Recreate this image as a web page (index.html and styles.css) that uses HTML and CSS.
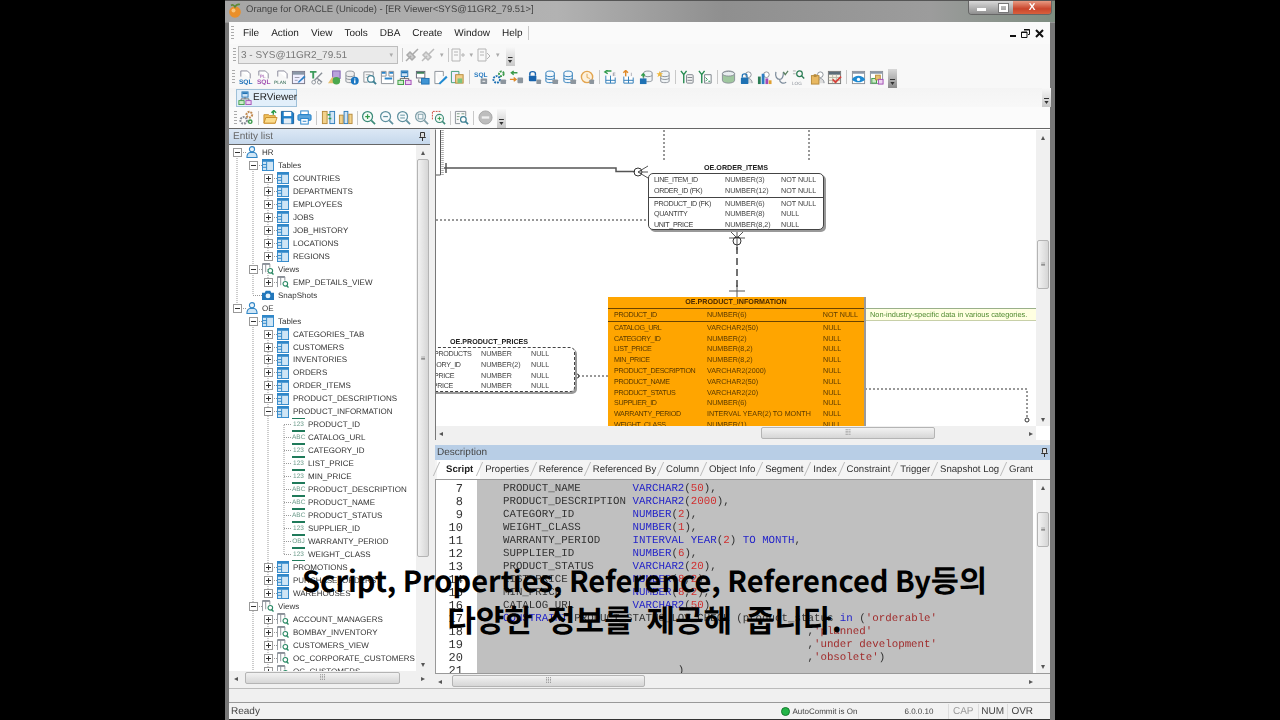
FILE: index.html
```html
<!DOCTYPE html>
<html lang="en">

<head>
    <meta charset="UTF-8">
    <title>Orange for ORACLE</title>
    <link rel="stylesheet" href="styles.css">
</head>

<body>

    <!-- icon set -->
    <svg class="defs" width="0" height="0">
        <symbol id="doc-sql" viewBox="0 0 16 16"><path d="M3 1h7l3 3v5M3 1v6" fill="#fff" stroke="#889"/><text x="1" y="15" class="t7" fill="#1b6fb8">SQL</text></symbol>
        <symbol id="doc-pl" viewBox="0 0 16 16"><path d="M3 1h7l3 3v5M3 1v5" fill="#fff" stroke="#889"/><text x="4" y="8" class="t5" fill="#a050b0">PL</text><text x="1" y="15" class="t7" fill="#a050b0">SQL</text></symbol>
        <symbol id="doc-plan" viewBox="0 0 16 16"><path d="M4 1h7l3 3v5M4 1v6" fill="#fff" stroke="#889"/><text x="0" y="15" class="t5" fill="#27624a">PLAN</text></symbol>
        <symbol id="edit" viewBox="0 0 16 16"><rect x="1.500" y="1.500" width="13" height="13" fill="#eef" stroke="#778"/><path d="M2 2h12v3H2z" fill="#8a97a8"/><path d="M4 8h5M4 11h3" stroke="#99a"/><path d="M7 13l7-7 1.500 1.500-7 6z" fill="#2a7fc4"/></symbol>
        <symbol id="scissor" viewBox="0 0 16 16"><path d="M1 2h7M4.500 2v7" stroke="#3c9a5a" stroke-width="2"/><path d="M14 3L6 11M9 9l5 4" stroke="#8a9098" stroke-width="1.500"/><circle cx="5" cy="13" r="2" fill="none" stroke="#8a9098"/><circle cx="11" cy="13" r="2" fill="none" stroke="#8a9098"/></symbol>
        <symbol id="obj" viewBox="0 0 16 16"><rect x="6" y="1" width="8" height="8" fill="#b9a2dc" stroke="#7d5db0"/><path d="M1 14l5-7 3 7z" fill="#e6c070"/><circle cx="10" cy="11.500" r="4" fill="#4ba84e"/></symbol>
        <symbol id="db-info" viewBox="0 0 16 16"><path d="M2 3c0-2.500 9-2.500 9 0v9c0 2-9 2-9 0z" fill="#eee" stroke="#8a9098"/><path d="M2 6c2 1.500 7 1.500 9 0M2 9c2 1.500 7 1.500 9 0" fill="none" stroke="#8a9098"/><circle cx="11.500" cy="11.500" r="4.200" fill="#1976c2"/><path d="M11.500 9v1M11.500 11v3" stroke="#fff" stroke-width="1.500"/></symbol>
        <symbol id="doc-find" viewBox="0 0 16 16"><path d="M2 2h10v4M2 2v11h4" fill="none" stroke="#8a9098"/><path d="M4 5h5M4 8h2" stroke="#aaa"/><circle cx="9.500" cy="9.500" r="3.500" fill="#fff" stroke="#3d7f92" stroke-width="1.300"/><path d="M12 12l3 3" stroke="#3d7f92" stroke-width="2"/></symbol>
        <symbol id="panes" viewBox="0 0 16 16"><path d="M1.500 1.500h5v5h-5zM9.500 1.500h5v5h-5zM1.500 6.500v8h13v-8" fill="#fff" stroke="#8a9098"/><path d="M2 2h4v2H2zM10 2h4v2h-4zM5 8h8v2H5z" fill="#2a85cb"/></symbol>
        <symbol id="er" viewBox="0 0 16 16"><rect x="4.500" y="1" width="7" height="6" fill="#cfe4f6" stroke="#1f72b4"/><path d="M5 1.500h6v2H5z" fill="#1f72b4"/><path d="M8 7v2M3.500 11V9h9v2" fill="none" stroke="#666"/><rect x="1" y="11" width="6" height="4.500" fill="#cdeccb" stroke="#3b9a41"/><rect x="9" y="11" width="6" height="4.500" fill="#ecd4f0" stroke="#a14cb5"/></symbol>
        <symbol id="grid" viewBox="0 0 16 16"><rect x="1.500" y="1.500" width="9" height="7" fill="#fff" stroke="#667"/><path d="M2 2h8v2H2z" fill="#3d7f58"/><path d="M4 10v3h3" fill="none" stroke="#666"/><rect x="7" y="9" width="8" height="6" fill="#3f94d4" stroke="#1f72b4"/></symbol>
        <symbol id="page-pen" viewBox="0 0 16 16"><path d="M2 1.500h9v5M2 1.500v13h5" fill="#fff" stroke="#8a9098"/><path d="M6 14l8-8 1.500 2-8 7.500z" fill="#1f8ad2"/></symbol>
        <symbol id="doc-color" viewBox="0 0 16 16"><path d="M1.500 1.500h8v12h-8z" fill="#eef" stroke="#3f9c73"/><rect x="6" y="5" width="8" height="9" fill="#f2ce8a" stroke="#b78a3a"/><rect x="8" y="9" width="5" height="5" fill="#7dc47f"/></symbol>
        <symbol id="sql-box" viewBox="0 0 16 16"><text x="0" y="7" class="t7" fill="#2b7cc0">SQL</text><rect x="7" y="9" width="7" height="6" rx="1" fill="#8d969e"/><path d="M9 12h3" stroke="#fff"/></symbol>
        <symbol id="gear-box" viewBox="0 0 16 16"><circle cx="5" cy="10" r="3.500" fill="none" stroke="#1f72b4" stroke-width="2" stroke-dasharray="2 1"/><circle cx="10" cy="4" r="2.500" fill="none" stroke="#3a9a4a" stroke-width="2" stroke-dasharray="2 1"/><rect x="9" y="10" width="6" height="5" rx="1" fill="#8d969e"/></symbol>
        <symbol id="arrows-box" viewBox="0 0 16 16"><path d="M9 3H3M5 1L2.500 3 5 5" fill="none" stroke="#3a9a4a" stroke-width="1.500"/><path d="M1 10h6M5 8l2.500 2L5 12" fill="none" stroke="#e08a28" stroke-width="1.500"/><rect x="9" y="8" width="6" height="6" rx="1" fill="#8d969e"/></symbol>
        <symbol id="lock-box" viewBox="0 0 16 16"><path d="M3 6V4c0-3 6-3 6 0v2" fill="none" stroke="#1763ad" stroke-width="1.500"/><rect x="2" y="6" width="8" height="6" rx="1" fill="#1763ad"/><rect x="10" y="10" width="5" height="5" rx="1" fill="#8d969e"/></symbol>
        <symbol id="db-box" viewBox="0 0 16 16"><path d="M2 3c0-2.500 9-2.500 9 0v9c0 2-9 2-9 0z" fill="#f3f8fc" stroke="#2c7bb8"/><path d="M2 6c2 1.500 7 1.500 9 0M2 9c2 1.500 7 1.500 9 0" fill="none" stroke="#2c7bb8"/><rect x="9" y="10" width="6" height="5" rx="1" fill="#8d969e"/></symbol>
        <symbol id="clock-box" viewBox="0 0 16 16"><circle cx="7.500" cy="7.500" r="6" fill="#fdf1dc" stroke="#e3a550" stroke-width="1.500"/><path d="M7.500 4v4l3 1" fill="none" stroke="#e3a550"/><rect x="10" y="10" width="5" height="5" rx="1" fill="#8d969e"/></symbol>
        <symbol id="t-in" viewBox="0 0 16 16"><path d="M9 1H3M5 0L2 2l3 2" fill="none" stroke="#2f9b4a" stroke-width="1.500"/><text x="10" y="6" class="t5" fill="#667">E</text><path d="M3 6v8h10V8" fill="#fff" stroke="#2c7bb8"/><path d="M3 11h10M8 6v8" stroke="#2c7bb8"/></symbol>
        <symbol id="t-up" viewBox="0 0 16 16"><path d="M5 7V1M2.500 3L5 .5 7.500 3" fill="none" stroke="#e08a28" stroke-width="1.500"/><text x="10" y="6" class="t5" fill="#667">I</text><path d="M3 7v7h10V8" fill="#fff" stroke="#2c7bb8"/><path d="M3 11h10M8 7v7" stroke="#2c7bb8"/></symbol>
        <symbol id="db-in" viewBox="0 0 16 16"><path d="M5 3c0-2.500 9-2.500 9 0v8c0 2-9 2-9 0z" fill="#f0f4f6" stroke="#8a9098"/><path d="M5 6c2 1.500 7 1.500 9 0" fill="none" stroke="#8a9098"/><rect x="1" y="9" width="7" height="6" fill="#1f72b4"/><path d="M4.500 8V4M2.500 6l2-2 2 2" fill="none" stroke="#2f9b4a" stroke-width="1.500"/></symbol>
        <symbol id="db-star" viewBox="0 0 16 16"><path d="M5 3c0-2.500 9-2.500 9 0v9c0 2-9 2-9 0z" fill="#f0f4f6" stroke="#8a9098"/><path d="M5 6c2 1.500 7 1.500 9 0M5 9c2 1.500 7 1.500 9 0" fill="none" stroke="#8a9098"/><path d="M4 1l1 2.500h2.500L5.500 5l1 2.500L4 6 1.500 7.500l1-2.500L.5 3.500H3z" fill="#f0b73a"/></symbol>
        <symbol id="y-db" viewBox="0 0 16 16"><path d="M1 1l3 4 3-4M4 5v9" fill="none" stroke="#278c52" stroke-width="1.500"/><rect x="7" y="5" width="7" height="9" rx="1" fill="#f2f2f2" stroke="#7a8088"/><path d="M8 8h5M8 11h5" stroke="#7a8088"/></symbol>
        <symbol id="y-doc" viewBox="0 0 16 16"><path d="M1 1l3 4 3-4M4 5v9" fill="none" stroke="#278c52" stroke-width="1.500"/><path d="M7 5h7v9H7z" fill="#fff" stroke="#7a8088"/><path d="M8 8l2 2-2 2M11 12h2" fill="none" stroke="#278c52"/></symbol>
        <symbol id="db-green" viewBox="0 0 16 16"><ellipse cx="8" cy="4" rx="6.500" ry="3" fill="#e9eef0" stroke="#8a9098"/><path d="M1.500 4v7c0 4 13 4 13 0V4" fill="#9fc79f" stroke="#8a9098"/><ellipse cx="8" cy="4" rx="6.500" ry="2.500" fill="#e9eef0" stroke="#8a9098"/></symbol>
        <symbol id="u-lock" viewBox="0 0 16 16"><circle cx="10" cy="5" r="3" fill="#fff" stroke="#8a9098"/><path d="M8 14c0-4 1-5 2-5s4 1 4 5" fill="#ddd" stroke="#8a9098"/><path d="M3.500 8V6c0-2.500 5-2.500 5 0v2" fill="none" stroke="#1f72b4" stroke-width="1.300"/><rect x="2" y="8" width="8" height="7" rx="1" fill="#1f72b4"/></symbol>
        <symbol id="u-bars" viewBox="0 0 16 16"><circle cx="10" cy="5" r="3" fill="#fff" stroke="#8a9098"/><rect x="1" y="7" width="3" height="8" fill="#2a7c54"/><rect x="5" y="4" width="3" height="11" fill="#2a7cc4"/><rect x="9" y="9" width="3" height="6" fill="#a04ab5"/><rect x="12.500" y="11" width="3" height="4" fill="#e0a030"/></symbol>
        <symbol id="scope" viewBox="0 0 16 16"><path d="M2 2c-1 5 1 8 4 8s4-3 4-8M6 10c0 4 4 5 7 3" fill="none" stroke="#7a8a9a" stroke-width="1.300"/><path d="M10 2l2 3 3-4" fill="none" stroke="#5a8060" stroke-width="1.300"/></symbol>
        <symbol id="log" viewBox="0 0 16 16"><circle cx="8" cy="4" r="3" fill="none" stroke="#2a7c54" stroke-width="1.300"/><path d="M10 6l3 3" stroke="#2a7c54" stroke-width="1.500"/><path d="M1 1h3M1 4h3" stroke="#aaa"/><text x="0" y="15.500" class="t5" fill="#8a9098">LOG</text></symbol>
        <symbol id="u-clip" viewBox="0 0 16 16"><circle cx="11" cy="5" r="3" fill="#fff" stroke="#8a9098"/><path d="M9 14c0-4 1-5 2-5s4 1 4 5" fill="#ddd" stroke="#8a9098"/><rect x="1.500" y="6" width="8" height="9" fill="#e8b860" stroke="#b78a3a"/><rect x="4" y="4.500" width="3" height="3" fill="#b78a3a"/></symbol>
        <symbol id="sheet-check" viewBox="0 0 16 16"><rect x="1.500" y="1.500" width="13" height="13" fill="#f7f2e8" stroke="#777"/><path d="M2 2h12v3H2z" fill="#5c6c78"/><path d="M2 8h12M2 11h12M6 5v9M10 5v9" stroke="#bba"/><path d="M6 10l3 3 6-6" fill="none" stroke="#d8403a" stroke-width="1.800"/></symbol>
        <symbol id="win-eye" viewBox="0 0 16 16"><rect x="1.500" y="1.500" width="13" height="13" fill="#fff" stroke="#8a9098"/><path d="M2 2h12v2H2z" fill="#8a97a8"/><path d="M1 10c3-5 11-5 14 0-3 4-11 4-14 0z" fill="#1f8ad2"/><circle cx="8" cy="10" r="1.800" fill="#fff"/></symbol>
        <symbol id="win-sq" viewBox="0 0 16 16"><rect x="1.500" y="1.500" width="13" height="13" fill="#fff" stroke="#8a9098"/><path d="M2 2h12v2H2z" fill="#8a97a8"/><rect x="3" y="9" width="5" height="5" fill="#cdeccb" stroke="#3b9a41"/><rect x="7" y="5.500" width="5" height="5" fill="#e8c070" stroke="#b78a3a"/><rect x="10" y="10" width="5" height="5" fill="#ecd4f0" stroke="#a14cb5"/></symbol>
        <symbol id="gears" viewBox="0 0 16 16"><circle cx="5" cy="11" r="3.500" fill="none" stroke="#8a9098" stroke-width="2.200" stroke-dasharray="2 1"/><circle cx="11" cy="5" r="3" fill="none" stroke="#c08a50" stroke-width="2.200" stroke-dasharray="2 1"/><circle cx="12" cy="12.500" r="1.800" fill="none" stroke="#3a9a4a" stroke-width="1.500"/></symbol>
        <symbol id="open" viewBox="0 0 16 16"><path d="M1 5h5l1 1h6v8H1z" fill="#f2c25c" stroke="#c98e2c"/><path d="M1 14l2-6h12l-2 6z" fill="#fbdc8c" stroke="#c98e2c"/><path d="M8 5V1M6 3l2.500-2.500L11 3" transform="translate(3 0)" fill="none" stroke="#2f9b4a" stroke-width="1.500"/></symbol>
        <symbol id="save" viewBox="0 0 16 16"><path d="M1.500 1.500h11l2 2v11h-13z" fill="#1f7fc9" stroke="#17609c"/><rect x="4" y="2" width="8" height="4.500" fill="#fff"/><rect x="4" y="9" width="8" height="5.500" fill="#e4eef6"/></symbol>
        <symbol id="print" viewBox="0 0 16 16"><rect x="4" y="1" width="8" height="4" fill="#fff" stroke="#1f7fc9"/><rect x="1" y="5" width="14" height="6" rx="1" fill="#5aa5dc" stroke="#1f7fc9"/><rect x="4" y="9" width="8" height="6" fill="#fff" stroke="#1f7fc9"/><path d="M6 12h4" stroke="#1f7fc9"/></symbol>
        <symbol id="sw-a" viewBox="0 0 16 16"><rect x="1.500" y="1.500" width="5" height="13" fill="#f2d28c" stroke="#b78a3a"/><rect x="9.500" y="1.500" width="5" height="13" fill="#d0e4f4" stroke="#2c7bb8"/><path d="M7 5h3M8 9h3" stroke="#2f9b4a" stroke-width="1.500"/></symbol>
        <symbol id="sw-b" viewBox="0 0 16 16"><rect x="1.500" y="5.500" width="4" height="9" fill="#f2d28c" stroke="#b78a3a"/><rect x="6.500" y="1.500" width="4" height="13" fill="#d0e4f4" stroke="#2c7bb8"/><rect x="11.500" y="4.500" width="3.500" height="10" fill="#f2d28c" stroke="#b78a3a"/></symbol>
        <symbol id="z-in" viewBox="0 0 16 16"><circle cx="7" cy="7" r="5.300" fill="#f4faf6" stroke="#3a8a78" stroke-width="1.300"/><path d="M11 11l4 4" stroke="#3a8a78" stroke-width="1.800"/><path d="M4.500 7h5M7 4.500v5" stroke="#2f9b4a" stroke-width="1.300"/></symbol>
        <symbol id="z-out" viewBox="0 0 16 16"><circle cx="7" cy="7" r="5.300" fill="#f6fafc" stroke="#5d8f9e" stroke-width="1.300"/><path d="M11 11l4 4" stroke="#5d8f9e" stroke-width="1.800"/><path d="M4.500 7h5" stroke="#5d8f9e" stroke-width="1.300"/></symbol>
        <symbol id="z-eq" viewBox="0 0 16 16"><circle cx="7" cy="7" r="5.300" fill="#f6fafc" stroke="#5d8f9e" stroke-width="1.300"/><path d="M11 11l4 4" stroke="#5d8f9e" stroke-width="1.800"/><path d="M4.500 5.500h5M4.500 8.500h5" stroke="#5d8f9e"/></symbol>
        <symbol id="z-fit" viewBox="0 0 16 16"><circle cx="7" cy="7" r="5.300" fill="#f6fafc" stroke="#7d9da6" stroke-width="1.300"/><path d="M11 11l4 4" stroke="#7d9da6" stroke-width="1.800"/><rect x="4.500" y="4.500" width="5" height="5" fill="none" stroke="#7d9da6"/></symbol>
        <symbol id="z-area" viewBox="0 0 16 16"><path d="M1.500 10V1.500H10" fill="none" stroke="#c9483c" stroke-dasharray="2 1"/><circle cx="9" cy="9" r="4.300" fill="#f4faf6" stroke="#3a8a78" stroke-width="1.200"/><path d="M12 12l3 3" stroke="#3a8a78" stroke-width="1.800"/><path d="M7 9h4M9 7v4" stroke="#2f9b4a"/></symbol>
        <symbol id="find-sheet" viewBox="0 0 16 16"><path d="M1.500 1.500h11v5M1.500 1.500v13h5" fill="#f7f7f7" stroke="#8a9098"/><path d="M3 4h3M8 4h3M3 7h3M3 10h2" stroke="#7a9a80"/><circle cx="10" cy="10" r="3" fill="#fff" stroke="#3d7f92" stroke-width="1.300"/><path d="M12 12l3 3" stroke="#3d7f92" stroke-width="1.800"/></symbol>
        <symbol id="no" viewBox="0 0 16 16"><circle cx="8" cy="8" r="7" fill="#bdbdbd" stroke="#a8a8a8"/><path d="M4 8h8" stroke="#efefef" stroke-width="2.500"/></symbol>
        <symbol id="pin" viewBox="0 0 7 9"><path d="M1.500 .5h4v4l1 1h-6l1-1z" fill="#ddd" stroke="#333"/><path d="M3.500 5.500V9" stroke="#333"/></symbol>

        <!-- tree -->
        <symbol id="user" viewBox="0 0 13 13"><circle cx="6.500" cy="3.500" r="2.800" fill="#eaf4fb" stroke="#3186c6" stroke-width="1.200"/><path d="M1 12.500c0-3 1-5 3-5.500h5c2 .5 3 2.500 3 5.500z" fill="#cfe6f6" stroke="#3186c6" stroke-width="1.200"/></symbol>
        <symbol id="table" viewBox="0 0 13 13"><rect width="13" height="13" fill="#2f87c9"/><rect x="1" y="3" width="11" height="9" fill="#cfe5f5"/><path d="M5 3v9M1 6h4M1 9h4" stroke="#2f87c9"/></symbol>
        <symbol id="view" viewBox="0 0 13 13"><path d="M.5 12V1h8v4M4 1v9" fill="none" stroke="#8a9098"/><path d="M.5 1h8" stroke="#8a9098" stroke-width="2"/><circle cx="9" cy="8.500" r="2.500" fill="#fff" stroke="#2c8a66" stroke-width="1.200"/><path d="M10.500 10.500l2 2" stroke="#2c8a66" stroke-width="1.500"/></symbol>
        <symbol id="camera" viewBox="0 0 13 13"><path d="M0 4h3l1-2h5l1 2h3v8H0z" fill="#2277bb"/><circle cx="6.500" cy="7.500" r="2.600" fill="#e6f3fb"/></symbol>
    </svg>

    <div class="window">

        <header class="title">
            <svg class="orange" viewBox="0 0 14 15"><circle cx="7" cy="9" r="5.800" fill="#e98f2a"/><circle cx="5.500" cy="7.500" r="2" fill="#f8c47a"/><path d="M3 2.500c2-1.500 3 0 4 1.500 1-2 3-3 5-2.500" fill="none" stroke="#5d8a35" stroke-width="1.600"/></svg>
            <span class="title-text">Orange for ORACLE (Unicode) - [ER Viewer&lt;SYS@11GR2_79.51&gt;]</span>
            <div class="controls">
                <span class="ctl ctl-min"><i></i></span>
                <span class="ctl ctl-max"><i></i></span>
                <span class="ctl ctl-close">X</span>
            </div>
        </header>

        <nav class="menubar">
            <span class="grip"></span>
            <span class="menu-item">File</span>
            <span class="menu-item">Action</span>
            <span class="menu-item">View</span>
            <span class="menu-item">Tools</span>
            <span class="menu-item">DBA</span>
            <span class="menu-item">Create</span>
            <span class="menu-item">Window</span>
            <span class="menu-item">Help</span>
            <span class="sep menu-sep"></span>
            <div class="mdi">
                <span class="mdi-min"></span>
                <svg viewBox="0 0 9 9" width="9" height="9"><path d="M3 .500h5.500v5H7M.500 3h5.500v5.500H.500z" fill="none" stroke="#111"/><path d="M3 1h5.500M.500 3.500h5.500" stroke="#111"/></svg>
                <svg viewBox="0 0 9 9" width="9" height="9"><path d="M1 1l7 7M8 1L1 8" stroke="#111" stroke-width="2"/></svg>
            </div>
        </nav>

        <div class="toolbar conn-bar">
            <span class="grip"></span>
            <div class="combo"><span>3 - SYS@11GR2_79.51</span><b>▾</b></div>
            <span class="sep"></span>
            <svg class="dim" viewBox="0 0 16 16" width="16" height="16"><path d="M2 14l5-5M6 5l5 5-3 3-5-5zM9 7l5-5" fill="#ccc" stroke="#aaa" stroke-width="1.500"/></svg>
            <svg class="dim" viewBox="0 0 16 16" width="16" height="16"><path d="M2 14l5-5M6 5l5 5-3 3-5-5zM9 7l5-5" fill="#ddd" stroke="#bbb" stroke-width="1.500"/></svg>
            <b class="drop">▾</b>
            <span class="sep"></span>
            <svg class="dim" viewBox="0 0 16 16" width="16" height="16"><path d="M2 2h8v12H2zM4 5h4M4 8h4M11 8h4M13 6v4" fill="none" stroke="#b4b4b4"/></svg>
            <b class="drop">▾</b>
            <svg class="dim" viewBox="0 0 16 16" width="16" height="16"><path d="M2 2h8v12H2zM4 5h4M4 8h4M11 6l3 3-3 3" fill="none" stroke="#b4b4b4"/></svg>
            <b class="drop">▾</b>
            <span class="more"></span>
        </div>

        <div class="toolbar icons-bar">
            <span class="grip"></span>
            <svg class="btn"><use href="#doc-sql"/></svg>
            <svg class="btn"><use href="#doc-pl"/></svg>
            <svg class="btn"><use href="#doc-plan"/></svg>
            <svg class="btn"><use href="#edit"/></svg>
            <svg class="btn"><use href="#scissor"/></svg>
            <svg class="btn"><use href="#obj"/></svg>
            <svg class="btn"><use href="#db-info"/></svg>
            <svg class="btn"><use href="#doc-find"/></svg>
            <svg class="btn"><use href="#panes"/></svg>
            <svg class="btn"><use href="#er"/></svg>
            <svg class="btn"><use href="#grid"/></svg>
            <svg class="btn"><use href="#page-pen"/></svg>
            <svg class="btn"><use href="#doc-color"/></svg>
            <span class="sep"></span>
            <svg class="btn"><use href="#sql-box"/></svg>
            <svg class="btn"><use href="#gear-box"/></svg>
            <svg class="btn"><use href="#arrows-box"/></svg>
            <svg class="btn"><use href="#lock-box"/></svg>
            <svg class="btn"><use href="#db-box"/></svg>
            <svg class="btn"><use href="#db-box"/></svg>
            <svg class="btn"><use href="#clock-box"/></svg>
            <span class="sep"></span>
            <svg class="btn"><use href="#t-in"/></svg>
            <svg class="btn"><use href="#t-up"/></svg>
            <svg class="btn"><use href="#db-in"/></svg>
            <svg class="btn"><use href="#db-star"/></svg>
            <span class="sep"></span>
            <svg class="btn"><use href="#y-db"/></svg>
            <svg class="btn"><use href="#y-doc"/></svg>
            <span class="sep"></span>
            <svg class="btn"><use href="#db-green"/></svg>
            <svg class="btn"><use href="#u-lock"/></svg>
            <svg class="btn"><use href="#u-bars"/></svg>
            <svg class="btn"><use href="#scope"/></svg>
            <svg class="btn"><use href="#log"/></svg>
            <svg class="btn"><use href="#u-clip"/></svg>
            <svg class="btn"><use href="#sheet-check"/></svg>
            <span class="sep"></span>
            <svg class="btn"><use href="#win-eye"/></svg>
            <svg class="btn"><use href="#win-sq"/></svg>
            <span class="more more-dark"></span>
        </div>

        <div class="toolbar doc-tabs">
            <div class="doc-tab"><svg class="btn"><use href="#er"/></svg>ERViewer</div>
            <span class="more more-end"></span>
        </div>

        <div class="toolbar er-bar">
            <span class="grip"></span>
            <svg class="btn"><use href="#gears"/></svg>
            <span class="sep"></span>
            <svg class="btn"><use href="#open"/></svg>
            <svg class="btn"><use href="#save"/></svg>
            <svg class="btn"><use href="#print"/></svg>
            <span class="sep"></span>
            <svg class="btn"><use href="#sw-a"/></svg>
            <svg class="btn"><use href="#sw-b"/></svg>
            <span class="sep"></span>
            <svg class="btn"><use href="#z-in"/></svg>
            <svg class="btn"><use href="#z-out"/></svg>
            <svg class="btn"><use href="#z-eq"/></svg>
            <svg class="btn"><use href="#z-fit"/></svg>
            <svg class="btn"><use href="#z-area"/></svg>
            <span class="sep"></span>
            <svg class="btn"><use href="#find-sheet"/></svg>
            <span class="sep"></span>
            <svg class="btn"><use href="#no"/></svg>
            <span class="more"></span>
        </div>

        <div class="main">

            <!-- 왼쪽 엔티티 목록 -->
            <section class="entity">
                <div class="dock-title">Entity list<svg class="pin"><use href="#pin"/></svg></div>
                <div class="entity-body">
                    <div class="tree">
                        <svg class="guides" width="70" height="526"><path d="M8 6V162M24 19V149M24 175V526M39 32V110M39 123V136M39 188V448M39 474V526M55 279V409"/></svg>
                        <div class="row l0"><i class="exp minus"></i><svg class="ti"><use href="#user"/></svg>HR</div>
                        <div class="row l1"><i class="exp minus"></i><svg class="ti"><use href="#table"/></svg>Tables</div>
                        <div class="row l2"><i class="exp"></i><svg class="ti"><use href="#table"/></svg>COUNTRIES</div>
                        <div class="row l2"><i class="exp"></i><svg class="ti"><use href="#table"/></svg>DEPARTMENTS</div>
                        <div class="row l2"><i class="exp"></i><svg class="ti"><use href="#table"/></svg>EMPLOYEES</div>
                        <div class="row l2"><i class="exp"></i><svg class="ti"><use href="#table"/></svg>JOBS</div>
                        <div class="row l2"><i class="exp"></i><svg class="ti"><use href="#table"/></svg>JOB_HISTORY</div>
                        <div class="row l2"><i class="exp"></i><svg class="ti"><use href="#table"/></svg>LOCATIONS</div>
                        <div class="row l2"><i class="exp"></i><svg class="ti"><use href="#table"/></svg>REGIONS</div>
                        <div class="row l1"><i class="exp minus"></i><svg class="ti"><use href="#view"/></svg>Views</div>
                        <div class="row l2"><i class="exp"></i><svg class="ti"><use href="#view"/></svg>EMP_DETAILS_VIEW</div>
                        <div class="row l1 leaf"><svg class="ti"><use href="#camera"/></svg>SnapShots</div>
                        <div class="row l0"><i class="exp minus"></i><svg class="ti"><use href="#user"/></svg>OE</div>
                        <div class="row l1"><i class="exp minus"></i><svg class="ti"><use href="#table"/></svg>Tables</div>
                        <div class="row l2"><i class="exp"></i><svg class="ti"><use href="#table"/></svg>CATEGORIES_TAB</div>
                        <div class="row l2"><i class="exp"></i><svg class="ti"><use href="#table"/></svg>CUSTOMERS</div>
                        <div class="row l2"><i class="exp"></i><svg class="ti"><use href="#table"/></svg>INVENTORIES</div>
                        <div class="row l2"><i class="exp"></i><svg class="ti"><use href="#table"/></svg>ORDERS</div>
                        <div class="row l2"><i class="exp"></i><svg class="ti"><use href="#table"/></svg>ORDER_ITEMS</div>
                        <div class="row l2"><i class="exp"></i><svg class="ti"><use href="#table"/></svg>PRODUCT_DESCRIPTIONS</div>
                        <div class="row l2"><i class="exp minus"></i><svg class="ti"><use href="#table"/></svg>PRODUCT_INFORMATION</div>
                        <div class="row l3"><span class="col-ic">123</span>PRODUCT_ID</div>
                        <div class="row l3"><span class="col-ic">ABC</span>CATALOG_URL</div>
                        <div class="row l3"><span class="col-ic">123</span>CATEGORY_ID</div>
                        <div class="row l3"><span class="col-ic">123</span>LIST_PRICE</div>
                        <div class="row l3"><span class="col-ic">123</span>MIN_PRICE</div>
                        <div class="row l3"><span class="col-ic">ABC</span>PRODUCT_DESCRIPTION</div>
                        <div class="row l3"><span class="col-ic">ABC</span>PRODUCT_NAME</div>
                        <div class="row l3"><span class="col-ic">ABC</span>PRODUCT_STATUS</div>
                        <div class="row l3"><span class="col-ic">123</span>SUPPLIER_ID</div>
                        <div class="row l3"><span class="col-ic">OBJ</span>WARRANTY_PERIOD</div>
                        <div class="row l3"><span class="col-ic">123</span>WEIGHT_CLASS</div>
                        <div class="row l2"><i class="exp"></i><svg class="ti"><use href="#table"/></svg>PROMOTIONS</div>
                        <div class="row l2"><i class="exp"></i><svg class="ti"><use href="#table"/></svg>PURCHASE_ORDERS</div>
                        <div class="row l2"><i class="exp"></i><svg class="ti"><use href="#table"/></svg>WAREHOUSES</div>
                        <div class="row l1"><i class="exp minus"></i><svg class="ti"><use href="#view"/></svg>Views</div>
                        <div class="row l2"><i class="exp"></i><svg class="ti"><use href="#view"/></svg>ACCOUNT_MANAGERS</div>
                        <div class="row l2"><i class="exp"></i><svg class="ti"><use href="#view"/></svg>BOMBAY_INVENTORY</div>
                        <div class="row l2"><i class="exp"></i><svg class="ti"><use href="#view"/></svg>CUSTOMERS_VIEW</div>
                        <div class="row l2"><i class="exp"></i><svg class="ti"><use href="#view"/></svg>OC_CORPORATE_CUSTOMERS</div>
                        <div class="row l2"><i class="exp"></i><svg class="ti"><use href="#view"/></svg>OC_CUSTOMERS</div>
                    </div>
                    <div class="vbar">
                        <span class="arrow">▴</span>
                        <span class="vtrack"><span class="thumb tree-vthumb">≡</span></span>
                        <span class="arrow">▾</span>
                    </div>
                </div>
                <div class="hbar">
                    <span class="arrow">◂</span>
                    <span class="htrack"><span class="thumb tree-hthumb">⦙⦙⦙</span></span>
                    <span class="arrow">▸</span>
                </div>
            </section>

            <div class="right">

                <!-- ER 다이어그램 -->
                <section class="er">
                    <div class="er-top">
                        <div class="canvas">
                            <svg class="wires" width="600" height="295">
                                <path class="solid thin" d="M4.500 0V45H0"/>
                                <path class="stripe" d="M6.500 0V45"/>
                                <path class="solid" d="M8 38H180V41.500H199M10 33V43"/>
                                <circle class="ring" cx="202" cy="42" r="4"/>
                                <path class="solid thin" d="M202 42L212 36M202 42L212 48M202 42H212"/>
                                <path class="dash" d="M228 0V32M373 0V32M0 90H212"/>
                                <path class="solid thin" d="M294 101L301 108L308 101M293 108H309M301 101V120M293 161H309M301 155V167"/>
                                <circle class="ring" cx="301" cy="111" r="4"/>
                                <path class="long-dash" d="M301 117V160"/>
                                <path class="dash" d="M142 246H172M429 259H591V288"/>
                                <circle class="ring" cx="141" cy="246" r="2"/>
                                <circle class="ring" cx="591" cy="290" r="2"/>
                            </svg>

                            <div class="node items-node">
                                <div class="node-title">OE.ORDER_ITEMS</div>
                                <div class="node-body">
                                    <div class="node-sec">
                                        <div class="attr"><span>LINE_ITEM_ID</span><span>NUMBER(3)</span><span>NOT NULL</span></div>
                                        <div class="attr"><span>ORDER_ID (FK)</span><span>NUMBER(12)</span><span>NOT NULL</span></div>
                                    </div>
                                    <div class="node-sec">
                                        <div class="attr"><span>PRODUCT_ID (FK)</span><span>NUMBER(6)</span><span>NOT NULL</span></div>
                                        <div class="attr"><span>QUANTITY</span><span>NUMBER(8)</span><span>NULL</span></div>
                                        <div class="attr"><span>UNIT_PRICE</span><span>NUMBER(8,2)</span><span>NULL</span></div>
                                    </div>
                                </div>
                            </div>

                            <div class="node prices-node">
                                <div class="node-title">OE.PRODUCT_PRICES</div>
                                <div class="node-body">
                                    <div class="attr"><span>#_OF_PRODUCTS</span><span>NUMBER</span><span>NULL</span></div>
                                    <div class="attr"><span>CATEGORY_ID</span><span>NUMBER(2)</span><span>NULL</span></div>
                                    <div class="attr"><span>HIGH_PRICE</span><span>NUMBER</span><span>NULL</span></div>
                                    <div class="attr"><span>LOW_PRICE</span><span>NUMBER</span><span>NULL</span></div>
                                </div>
                            </div>

                            <div class="node info-node">
                                <div class="node-title">OE.PRODUCT_INFORMATION</div>
                                <div class="node-sec">
                                    <div class="attr"><span>PRODUCT_ID</span><span>NUMBER(6)</span><span>NOT NULL</span></div>
                                </div>
                                <div class="node-sec">
                                    <div class="attr"><span>CATALOG_URL</span><span>VARCHAR2(50)</span><span>NULL</span></div>
                                    <div class="attr"><span>CATEGORY_ID</span><span>NUMBER(2)</span><span>NULL</span></div>
                                    <div class="attr"><span>LIST_PRICE</span><span>NUMBER(8,2)</span><span>NULL</span></div>
                                    <div class="attr"><span>MIN_PRICE</span><span>NUMBER(8,2)</span><span>NULL</span></div>
                                    <div class="attr"><span>PRODUCT_DESCRIPTION</span><span>VARCHAR2(2000)</span><span>NULL</span></div>
                                    <div class="attr"><span>PRODUCT_NAME</span><span>VARCHAR2(50)</span><span>NULL</span></div>
                                    <div class="attr"><span>PRODUCT_STATUS</span><span>VARCHAR2(20)</span><span>NULL</span></div>
                                    <div class="attr"><span>SUPPLIER_ID</span><span>NUMBER(6)</span><span>NULL</span></div>
                                    <div class="attr"><span>WARRANTY_PERIOD</span><span>INTERVAL YEAR(2) TO MONTH</span><span>NULL</span></div>
                                    <div class="attr"><span>WEIGHT_CLASS</span><span>NUMBER(1)</span><span>NULL</span></div>
                                </div>
                            </div>

                            <div class="note">Non-industry-specific data in various categories.</div>
                        </div>
                        <div class="vbar">
                            <span class="arrow">▴</span>
                            <span class="vtrack"><span class="thumb er-vthumb">≡</span></span>
                            <span class="arrow">▾</span>
                        </div>
                    </div>
                    <div class="hbar">
                        <span class="arrow">◂</span>
                        <span class="htrack"><span class="thumb er-hthumb">⦙⦙⦙</span></span>
                        <span class="arrow">▸</span>
                    </div>
                </section>

                <!-- 하단 설명 패널 -->
                <section class="desc">
                    <div class="dock-title desc-title">Description<svg class="pin"><use href="#pin"/></svg></div>
                    <div class="tabs">
                        <span class="tab active">Script</span>
                        <span class="tab">Properties</span>
                        <span class="tab">Reference</span>
                        <span class="tab">Referenced By</span>
                        <span class="tab">Column</span>
                        <span class="tab">Object Info</span>
                        <span class="tab">Segment</span>
                        <span class="tab">Index</span>
                        <span class="tab">Constraint</span>
                        <span class="tab">Trigger</span>
                        <span class="tab">Snapshot Log</span>
                        <span class="tab">Grant</span>
                    </div>
                    <div class="editor-wrap">
                        <div class="editor">
                            <div class="gutter">7
8
9
10
11
12
13
14
15
16
17
18
19
20
21</div>
                            <div class="fold"></div>
<pre class="code">    PRODUCT_NAME        <span class="k">VARCHAR2</span>(<span class="n">50</span>),
    PRODUCT_DESCRIPTION <span class="k">VARCHAR2</span>(<span class="n">2000</span>),
    CATEGORY_ID         <span class="k">NUMBER</span>(<span class="n">2</span>),
    WEIGHT_CLASS        <span class="k">NUMBER</span>(<span class="n">1</span>),
    WARRANTY_PERIOD     <span class="k">INTERVAL YEAR</span>(<span class="n">2</span>) <span class="k">TO MONTH</span>,
    SUPPLIER_ID         <span class="k">NUMBER</span>(<span class="n">6</span>),
    PRODUCT_STATUS      <span class="k">VARCHAR2</span>(<span class="n">20</span>),
    LIST_PRICE          <span class="k">NUMBER</span>(<span class="n">8</span>,<span class="n">2</span>),
    MIN_PRICE           <span class="k">NUMBER</span>(<span class="n">8</span>,<span class="n">2</span>),
    CATALOG_URL         <span class="k">VARCHAR2</span>(<span class="n">50</span>),
    <span class="k">CONSTRAINT</span> PRODUCT_STATUS_LOV_CHECK (product_status <span class="k">in</span> (<span class="s">'orderable'</span>
                                                   ,<span class="s">'planned'</span>
                                                   ,<span class="s">'under development'</span>
                                                   ,<span class="s">'obsolete'</span>)
                               )</pre>
                        </div>
                        <div class="vbar">
                            <span class="arrow">▴</span>
                            <span class="vtrack"><span class="thumb ed-vthumb">≡</span></span>
                            <span class="arrow">▾</span>
                        </div>
                    </div>
                    <div class="hbar">
                        <span class="arrow">◂</span>
                        <span class="htrack"><span class="thumb ed-hthumb">⦙⦙⦙</span></span>
                        <span class="arrow">▸</span>
                    </div>
                </section>
            </div>
        </div>

        <div class="blank"></div>

        <footer class="status">
            <span class="ready">Ready</span>
            <span class="commit"><i class="led"></i>AutoCommit is On</span>
            <span class="ver">6.0.0.10</span>
            <span class="key off">CAP</span>
            <span class="key">NUM</span>
            <span class="key">OVR</span>
        </footer>

        <!-- 자막 -->
        <div class="caption">Script, Properties, Reference, Referenced By<span class="caption-end">등의</span><br><span class="caption-ko">다양한 정보를 제공해 줍니다.</span></div>
    </div>

</body>

</html>
```

FILE: styles.css
```css
* {
    box-sizing: border-box;
}

body {
    margin: 0;
    height: 720px;
    overflow: hidden;
    background-color: black;
    display: flex;
    justify-content: center;
    font-family: "Liberation Sans", "Noto Sans CJK KR", sans-serif;
    color: #333;
    text-rendering: geometricPrecision;
}

.defs {
    position: absolute;
}

.t7 {
    font: bold 7px "Liberation Sans", sans-serif;
}

.t5 {
    font: 5px "Liberation Sans", sans-serif;
}

.window {
    position: relative;
    width: 830px;
    height: 720px;
    padding: 0 5px 0 4px;
    background: linear-gradient(#8d8d8d, #b4b4b4 22px, #777 23px);
    display: flex;
    flex-direction: column;
    overflow: hidden;
}

/* video softness */
.window > :not(.caption) {
    filter: blur(.3px);
}

/* title bar */
.title {
    height: 22px;
    flex: none;
    margin: 0 -5px 0 -4px;
    padding: 0 0 0 3px;
    display: flex;
    align-items: flex-start;
    border-top: 1px solid #555;
    background: linear-gradient(90deg, #a6a6a6, #b2b2b2 40%, #8f8f8f 60%, #9c9c9c 85%, #7d8d80);
}

.orange {
    width: 14px;
    height: 15px;
    margin-top: 2px;
}

.title-text {
    margin: 3px 0 0 4px;
    font-size: 9.500px;
    color: #444;
}

.controls {
    margin-left: auto;
    margin-right: 3px;
    width: 84px;
    height: 14px;
    display: flex;
    border: 1px solid #666;
    border-top: 0;
    border-radius: 0 0 4px 4px;
    overflow: hidden;
}

.ctl {
    display: flex;
    align-items: center;
    justify-content: center;
    color: white;
    font-size: 10px;
    font-weight: bold;
    background: linear-gradient(#d8d8d8, #8f8f8f);
}

.ctl-min {
    width: 24px;
}

.ctl-min i {
    width: 9px;
    height: 3px;
    margin-top: 4px;
    background-color: white;
}

.ctl-max {
    width: 20px;
}

.ctl-max i {
    width: 9px;
    height: 8px;
    border: 2px solid white;
    box-shadow: 0 0 0 1px #777;
}

.ctl-close {
    flex: 1;
    background: linear-gradient(#e89a82, #c9452c 60%, #d8603c);
}

/* menu and toolbars */
.menubar,
.toolbar {
    flex: none;
    display: flex;
    align-items: center;
    background-color: #f8f8f8;
}

.menubar {
    height: 22px;
    padding-left: 2px;
    font-size: 10px;
    color: #222;
    background-color: #fafafa;
}

.menu-item {
    margin-left: 9px;
    margin-right: 3px;
}

.menu-sep {
    margin-left: 4px;
}

.mdi {
    margin-left: auto;
    margin-right: 6px;
    display: flex;
    align-items: center;
    gap: 5px;
}

.mdi-min {
    width: 6px;
    height: 2px;
    margin-top: 6px;
    background-color: #111;
}

.grip {
    width: 3px;
    height: 14px;
    flex: none;
    background: repeating-linear-gradient(#aaa 0 1px, transparent 1px 3px);
}

.sep {
    width: 1px;
    height: 14px;
    flex: none;
    margin: 0 2.500px;
    background-color: #c8c8c8;
}

.btn {
    width: 15px;
    height: 15px;
    margin: 0 1.330px;
    flex: none;
}

.more {
    width: 9px;
    height: 19px;
    flex: none;
    margin-left: 3px;
    align-self: flex-end;
    background: linear-gradient(#f8f8f8, #c8c8c8);
    position: relative;
}

.more::after {
    content: "";
    position: absolute;
    left: 2px;
    bottom: 3px;
    width: 5px;
    height: 5px;
    border-top: 1px solid #333;
    background: linear-gradient(transparent 2px, #333 2px);
    clip-path: polygon(0 0, 100% 0, 100% 40%, 50% 100%, 0 40%);
}

.more-dark {
    background: linear-gradient(#d8d8d8, #8a8a8a);
}

.conn-bar {
    height: 22px;
    padding-left: 4px;
}

.conn-bar .sep {
    margin: 0 1px;
}

.combo {
    width: 160px;
    height: 18px;
    margin-left: 2px;
    margin-right: 3px;
    padding: 0 4px 0 2px;
    display: flex;
    align-items: center;
    justify-content: space-between;
    font-size: 10px;
    color: #777;
    background-color: #eaeaea;
    border: 1px solid #bdbdbd;
}

.combo b,
.drop {
    font-size: 7px;
    font-weight: normal;
    color: #aaa;
}

.dim {
    flex: none;
}

.drop {
    margin: 0 3px 0 4px;
}

.icons-bar {
    height: 22px;
    padding-left: 3px;
}

.icons-bar .grip {
    margin-right: 2px;
}

.doc-tabs {
    height: 19px;
    padding-left: 7px;
    background: linear-gradient(#f4f4f4, #f8f8f8);
}

.doc-tab {
    height: 18px;
    width: 61px;
    display: flex;
    align-items: center;
    font-size: 10px;
    color: #222;
    background-color: #e2effa;
    border: 1px solid #9fc0d8;
}

.doc-tab .btn {
    margin: 0 1px 0 1px;
    width: 14px;
    height: 14px;
}

.more-end {
    margin-left: auto;
    margin-right: -1px;
}

.er-bar {
    height: 21px;
    padding-left: 5px;
    background-color: #fbfbfb;
}

.er-bar .btn {
    margin: 0 1.200px;
}

.er-bar .grip {
    margin-right: 1px;
}

.er-bar .sep {
    margin: 0 2.500px;
}

/* main area */
.main {
    height: 560px;
    flex: none;
    display: flex;
    gap: 5px;
    background-color: #f0f0f0;
    border-top: 1px solid #666;
}

.dock-title {
    height: 16px;
    flex: none;
    display: flex;
    align-items: center;
    justify-content: space-between;
    padding: 0 4px;
    font-size: 10px;
    color: #666;
    background: linear-gradient(#dce8f5, #c6d8ec);
    border-bottom: 1px solid #666;
}

.pin {
    width: 7px;
    height: 9px;
}

.entity {
    width: 201px;
    flex: none;
    display: flex;
    flex-direction: column;
    height: 558px;
}

.entity-body {
    height: 526px;
    display: flex;
}

.tree {
    position: relative;
    flex: 1;
    min-width: 0;
    padding-top: 1px;
    overflow: hidden;
    background-color: white;
    font-size: 8px;
    color: #333;
    white-space: nowrap;
}

.guides {
    position: absolute;
    left: 0;
    top: 1px;
}

.guides path {
    fill: none;
    stroke: #999;
    stroke-dasharray: 1 1;
}

.row {
    position: relative;
    height: 12.970px;
    display: flex;
    align-items: center;
}

.row::before {
    content: "";
    position: absolute;
    top: 6px;
    width: 9px;
    border-top: 1px dotted #999;
}

.l0 {
    padding-left: 4px;
}

.l0::before {
    left: 8px;
}

.l1 {
    padding-left: 20px;
}

.l1::before {
    left: 24px;
}

.l1.leaf {
    padding-left: 33px;
}

.l2 {
    padding-left: 35px;
}

.l2::before {
    left: 39px;
}

.l3 {
    padding-left: 63px;
}

.l3::before {
    left: 55px;
}

.exp {
    position: relative;
    width: 9px;
    height: 9px;
    flex: none;
    margin-right: 4px;
    border: 1px solid #999;
    background:
        linear-gradient(#333, #333) center / 5px 1px no-repeat,
        linear-gradient(#333, #333) center / 1px 5px no-repeat,
        white;
}

.exp.minus {
    background:
        linear-gradient(#333, #333) center / 5px 1px no-repeat,
        white;
}

.ti {
    position: relative;
    width: 12px;
    height: 12px;
    flex: none;
    margin-right: 4px;
}

.col-ic {
    position: relative;
    width: 13px;
    height: 13px;
    flex: none;
    margin-right: 3px;
    font-size: 6.500px;
    line-height: 11px;
    text-align: center;
    color: #6e9d8c;
    background-color: white;
    border-top: 1px solid #1f7a5a;
    border-bottom: 1px solid #1f7a5a;
}

/* scrollbars */
.vbar {
    width: 14px;
    flex: none;
    display: flex;
    flex-direction: column;
    background-color: #f0f0f0;
}

.hbar {
    height: 14px;
    flex: none;
    display: flex;
    background-color: #f0f0f0;
}

.right .hbar {
    margin-right: 14px;
}

.right .hbar .arrow {
    width: 10px;
}

.arrow {
    flex: none;
    width: 14px;
    height: 14px;
    display: flex;
    align-items: center;
    justify-content: center;
    font-size: 8px;
    color: #555;
    overflow: hidden;
}

.vtrack,
.htrack {
    flex: 1;
    min-width: 0;
    min-height: 0;
    display: flex;
}

.vtrack {
    flex-direction: column;
}

.thumb {
    display: flex;
    align-items: center;
    justify-content: center;
    flex: none;
    font-size: 8px;
    color: #777;
    border: 1px solid #b4b4b4;
    border-radius: 2px;
}

.vbar .thumb {
    margin: 0 1px;
    background: linear-gradient(90deg, #f2f2f2, #d6d6d6);
}

.hbar .thumb {
    margin: 1px 0;
    background: linear-gradient(#f2f2f2, #d6d6d6);
}

.tree-vthumb {
    height: 398px;
}

.tree-hthumb {
    margin-left: 2px !important;
    width: 155px;
}

.er-vthumb {
    margin-top: 96px !important;
    height: 49px;
}

.er-hthumb {
    margin-left: 315px !important;
    width: 174px;
}

.ed-vthumb {
    margin-top: 18px !important;
    height: 35px;
}

.ed-hthumb {
    margin-left: 7px !important;
    width: 193px;
}

/* right side */
.right {
    flex: 1;
    min-width: 0;
    display: flex;
    flex-direction: column;
}

.er {
    height: 311px;
    flex: none;
    display: flex;
    flex-direction: column;
    background-color: white;
    border-top: 1px solid white;
    border-left: 1px solid #777;
}

.er-top {
    flex: 1;
    min-height: 0;
    display: flex;
}

.canvas {
    position: relative;
    flex: 1;
    min-width: 0;
    overflow: hidden;
    background-color: white;
    font-size: 7.150px;
}

.wires {
    position: absolute;
    left: 0;
    top: 0;
}

.wires path,
.wires circle {
    fill: none;
}

.solid {
    stroke: #555;
    stroke-width: 1.500;
}

.thin {
    stroke-width: 1;
}

.stripe {
    stroke: #aaa;
    stroke-width: 2.500;
    stroke-dasharray: 1 1;
}

.ring {
    stroke: #333;
}

.dash {
    stroke: #333;
    stroke-dasharray: 2 2;
}

.long-dash {
    stroke: #444;
    stroke-width: 1.500;
    stroke-dasharray: 7 4;
}

.node {
    position: absolute;
    color: #444;
}

.node-title {
    height: 10px;
    line-height: 10px;
    text-align: center;
    font-weight: bold;
    color: #222;
}

.node-body {
    background-color: white;
}

.attr {
    display: flex;
    height: 10.800px;
    line-height: 10.800px;
    white-space: nowrap;
}

.attr span:nth-child(1) {
    letter-spacing: -.35px;
}

.items-node {
    left: 212px;
    top: 33px;
    width: 176px;
}

.items-node .node-body {
    height: 57px;
    padding: 1px 5px;
    border: 1px solid #444;
    border-radius: 5px;
    box-shadow: 2px 2px 0 #999;
}

.items-node .node-sec + .node-sec {
    margin: 0 -5px;
    padding: 1px 5px 0;
    border-top: 1px solid #444;
}

.items-node .attr span:nth-child(1) {
    width: 71px;
}

.items-node .attr span:nth-child(2) {
    width: 56px;
}

.prices-node {
    left: -33px;
    top: 207px;
    width: 172px;
}

.prices-node .node-body {
    height: 45px;
    padding: 1px 5px;
    border: 1px dashed #444;
    border-radius: 5px;
    box-shadow: 2px 2px 0 #999;
}

.prices-node .attr span:nth-child(1) {
    width: 72px;
    padding-left: 5px;
}

.prices-node .attr span:nth-child(2) {
    width: 50px;
}

.info-node {
    left: 172px;
    top: 167px;
    width: 256px;
    height: 140px;
    color: #5a3a00;
    background-color: #ffa500;
    box-shadow: 2px 0 0 #999;
}

.info-node .node-title {
    height: 11px;
    line-height: 11px;
    color: #4a2a00;
}

.info-node .node-sec {
    padding: 0 6px;
    border-top: 1px solid #6a4300;
}

.info-node .attr:first-child {
    margin-top: 1px;
}

.info-node .attr span:nth-child(1) {
    width: 93px;
}

.info-node .attr span:nth-child(2) {
    width: 116px;
}

.note {
    position: absolute;
    left: 430px;
    top: 178px;
    width: 170px;
    height: 13px;
    padding-left: 4px;
    line-height: 12px;
    font-size: 7.400px;
    color: #4f8a2f;
    white-space: nowrap;
    background-color: #ffffe1;
    border-top: 1px solid #9ab08a;
    border-bottom: 1px solid #c8d0a8;
}

/* description panel */
.desc {
    flex: 1;
    min-height: 0;
    margin-top: 5px;
    display: flex;
    flex-direction: column;
}

.desc-title {
    height: 15px;
    background: #b8cee6;
    border-bottom: 0;
    color: #444;
    padding: 0 2px;
}

.tabs {
    height: 20px;
    flex: none;
    display: flex;
    align-items: center;
    padding-left: 2px;
    font-size: 9.600px;
    color: #333;
    background-color: #f4f4f4;
    border-bottom: 1px solid #999;
}

.tab {
    position: relative;
    height: 100%;
    padding: 0 4.800px 0 5px;
    line-height: 20px;
    white-space: nowrap;
}

.tab::before {
    content: "";
    position: absolute;
    left: -1px;
    top: 2px;
    height: 14px;
    border-left: 1px solid #bbb;
    transform: skewX(-24deg);
}

.tab.active {
    padding-left: 9px;
    padding-right: 7px;
    font-weight: bold;
    color: #222;
    background-color: white;
}

.editor-wrap {
    flex: 1;
    min-height: 0;
    display: flex;
    background-color: white;
    border: 1px solid #999;
    border-top: 0;
    border-right: 0;
}

.editor {
    flex: 1;
    min-width: 0;
    display: flex;
    overflow: hidden;
    padding-top: 3px;
    font: 10.800px/13px "Liberation Mono", monospace;
    color: #333;
    white-space: pre;
}

.gutter {
    width: 27px;
    flex: none;
    text-align: right;
    font-size: 12px;
}

.fold {
    width: 14px;
    flex: none;
}

.code {
    flex: 1;
    margin: -3px 3px 0 0;
    padding: 3px 0 0;
    font: inherit;
    background-color: #c0c0c0;
}

.k {
    color: #2424c8;
}

.n {
    color: #d03030;
}

.s {
    color: #a02c2c;
}

/* bottom */
.blank {
    height: 15px;
    flex: none;
    background-color: #f0f0f0;
    border-top: 1px solid #bbb;
    border-bottom: 1px solid #999;
}

.status {
    height: 17px;
    flex: none;
    display: flex;
    align-items: center;
    padding: 1px 13.500px 0 2px;
    font-size: 8px;
    color: #444;
    background-color: #f2f2f2;
    border-bottom: 1px solid #333;
}

.ready {
    font-size: 10px;
    margin-right: auto;
}

.commit {
    width: 124px;
    display: flex;
    align-items: center;
    gap: 3px;
}

.led {
    width: 9px;
    height: 9px;
    border-radius: 50%;
    background-color: #24b548;
    border: 1px solid #157a2d;
}

.ver {
    width: 43.500px;
}

.key {
    width: 29.500px;
    height: 100%;
    line-height: 16px;
    font-size: 10px;
    text-align: center;
    border-left: 1px solid #ddd;
}

.key.off {
    color: #999;
}

.caption {
    position: absolute;
    left: 9px;
    right: 0;
    top: 560px;
    font-size: 29px;
    font-weight: 700;
    line-height: 40px;
    text-align: center;
    color: black;
    font-family: "Noto Sans CJK KR", sans-serif;
}

.caption-end {
    font-size: 30.500px;
    line-height: 1;
}

.caption-ko {
    font-size: 31px;
    line-height: 1;
    word-spacing: 7px;
}
```
